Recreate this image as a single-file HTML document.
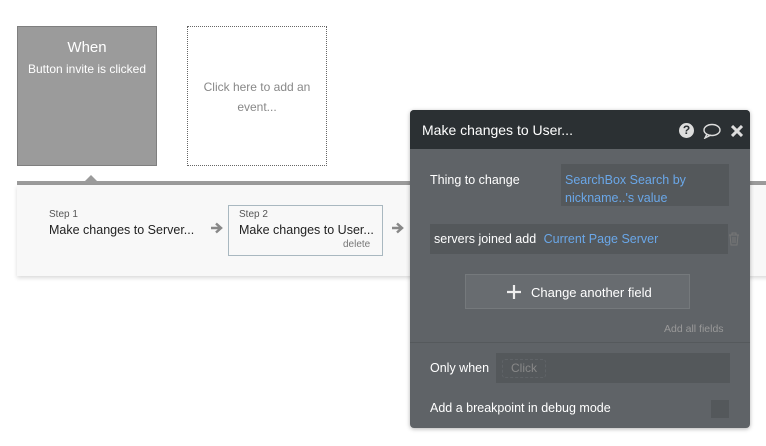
<!DOCTYPE html>
<html><head><style>
body{margin:0;width:766px;height:446px;background:#fff;position:relative;overflow:hidden;font-family:"Liberation Sans",sans-serif;}
.a{position:absolute;}
</style></head><body>
<div class="a" style="left:17px;top:26px;width:138px;height:138px;background:#9b9b9b;border:1px solid #7f7f7f;color:#fff;text-align:center;">
<div style="font-size:15px;margin-top:12px;">When</div>
<div style="font-size:12px;margin-top:6px;">Button invite is clicked</div>
</div>
<div class="a" style="left:187px;top:26px;width:138px;height:138px;border:1px dotted #666;color:#888;text-align:center;font-size:12px;line-height:20px;">
<div style="margin-top:50px;">Click here to add an<br>event...</div>
</div>
<div class="a" style="left:17px;top:181px;width:760px;height:4px;background:#9b9b9b;"></div>
<div class="a" style="left:84px;top:175px;width:0;height:0;border-left:7px solid transparent;border-right:7px solid transparent;border-bottom:7px solid #9b9b9b;"></div>
<div class="a" style="left:17px;top:185px;width:760px;height:91px;background:#f8f8f8;box-shadow:0 2px 4px rgba(0,0,0,.15);"></div>
<div class="a" style="left:49px;top:209px;font-size:10px;color:#555;">Step 1</div>
<div class="a" style="left:49px;top:223px;font-size:12.5px;color:#222;">Make changes to Server...</div>
<svg class="a" style="left:210px;top:222px" width="13" height="12"><path d="M1 6H10M6 1.5L11 6L6 10.5" fill="none" stroke="#888" stroke-width="2.5"/></svg>
<div class="a" style="left:228px;top:205px;width:153px;height:49px;border:1px solid #a9b8c0;background:#f8f8f8;"></div>
<div class="a" style="left:239px;top:209px;font-size:10px;color:#555;">Step 2</div>
<div class="a" style="left:239px;top:223px;font-size:12.5px;color:#222;">Make changes to User...</div>
<div class="a" style="left:343px;top:239px;font-size:10px;color:#777;">delete</div>
<svg class="a" style="left:391px;top:222px" width="13" height="12"><path d="M1 6H10M6 1.5L11 6L6 10.5" fill="none" stroke="#888" stroke-width="2.5"/></svg>

<div class="a" style="left:410px;top:110px;width:340px;height:318px;background:#5f6367;border-radius:4px;overflow:hidden;box-shadow:0 1px 4px rgba(0,0,0,.3);">
<div class="a" style="left:0;top:0;width:340px;height:39px;background:#2b3033;"></div>
<div class="a" style="left:12px;top:12px;font-size:14px;color:#fff;">Make changes to User...</div>
<div class="a" style="left:269px;top:13px;width:15px;height:15px;border-radius:50%;background:#ddd;color:#2b3033;font-size:12px;font-weight:bold;text-align:center;line-height:15px;">?</div>
<svg class="a" style="left:292px;top:13px" width="20" height="16"><ellipse cx="10" cy="7" rx="8" ry="5.5" fill="none" stroke="#ddd" stroke-width="1.4"/><path d="M5 11 L3 15 L9 12" fill="none" stroke="#ddd" stroke-width="1.4"/></svg>
<svg class="a" style="left:321px;top:15px" width="12" height="12"><path d="M1 1L11 11M11 1L1 11" stroke="#ddd" stroke-width="3"/></svg>
<div class="a" style="left:20px;top:63px;font-size:12.5px;color:#fff;">Thing to change</div>
<div class="a" style="left:151px;top:54px;width:168px;height:42px;background:#54585b;"></div>
<div class="a" style="left:155px;top:61px;font-size:12.5px;color:#6aa7e8;line-height:18px;">SearchBox Search by<br>nickname..'s value</div>
<div class="a" style="left:20px;top:114px;width:298px;height:30px;background:#54585b;"></div>
<div class="a" style="left:24px;top:122px;font-size:12.5px;color:#fff;">servers joined add <span style="color:#6aa7e8;margin-left:4px;">Current Page Server</span></div>
<svg class="a" style="left:318px;top:122px" width="12" height="14"><path d="M1 3H11M4 3V1H8V3M2 3L3 13H9L10 3M5 5V11M7 5V11" fill="none" stroke="#777" stroke-width="1"/></svg>
<div class="a" style="left:55px;top:164px;width:223px;height:33px;background:#686c70;border:1px solid #75797c;"></div>
<svg class="a" style="left:97px;top:175px" width="14" height="14"><path d="M7 0V14M0 7H14" stroke="#eee" stroke-width="2.2"/></svg>
<div class="a" style="left:121px;top:175px;font-size:13px;color:#fff;">Change another field</div>
<div class="a" style="left:254px;top:213px;font-size:10.5px;color:#999;">Add all fields</div>
<div class="a" style="left:0;top:232px;width:340px;height:1px;background:#55595c;"></div>
<div class="a" style="left:20px;top:251px;font-size:12.5px;color:#fff;">Only when</div>
<div class="a" style="left:86px;top:243px;width:234px;height:30px;background:#54585b;"></div>
<div class="a" style="left:92px;top:249px;width:42px;height:17px;border:1px dashed #5f6367;border-radius:3px;font-size:12px;color:#888;text-align:center;line-height:17px;">Click</div>
<div class="a" style="left:20px;top:291px;font-size:12.5px;color:#fff;">Add a breakpoint in debug mode</div>
<div class="a" style="left:301px;top:290px;width:18px;height:18px;background:#54585b;"></div>
</div>
</body></html>
